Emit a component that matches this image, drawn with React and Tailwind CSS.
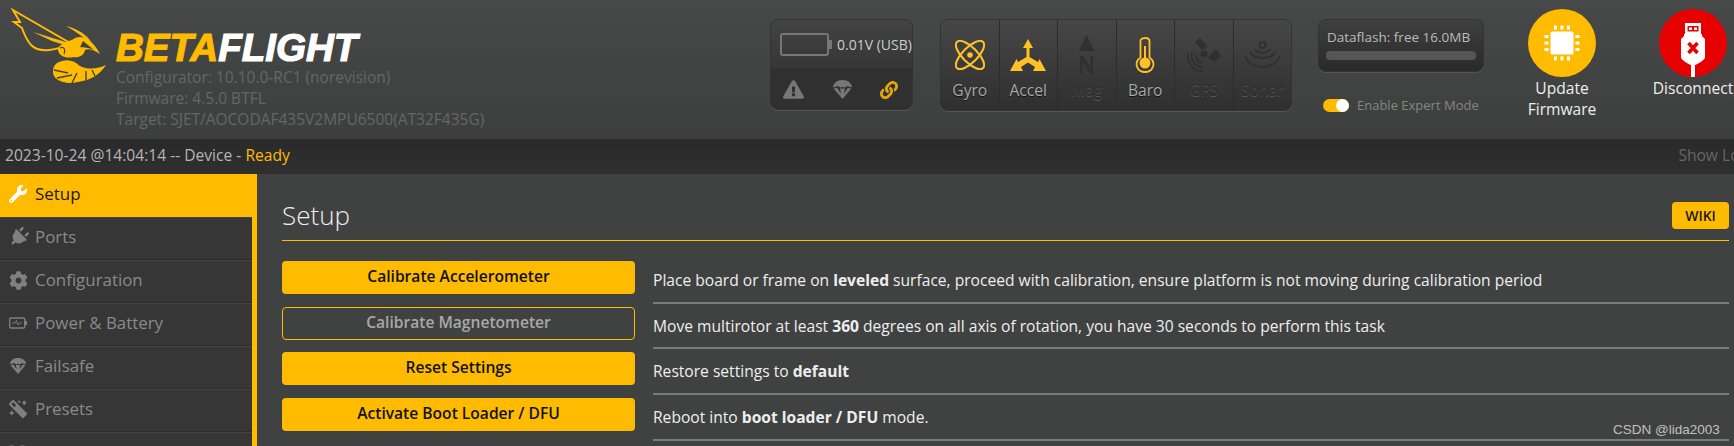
import React from "react";
import { FaWrench, FaPlug, FaCog, FaMagic, FaExclamationTriangle, FaLink, FaProjectDiagram } from "react-icons/fa";

const Wasp = () => (
  <svg width="116" height="90" viewBox="0 0 116 90" className="shrink-0">
    {/* wings */}
    <path d="M13 10 L70 43 C58 50 40 54 31 45 C27 40 24 34 22 28 L14 22 L20 22 Z" fill="none" stroke="#ffbb00" strokeWidth="2" />
    <path d="M33 32 L69 43 L68 46 L52 41 Z" fill="#ffbb00" />
    {/* antenna */}
    <path d="M66 26 C78 29 88 35 92 44 C84 37 76 32 66 26 Z" fill="#ffbb00" />
    {/* head and thorax */}
    <path d="M72 40 C80 33 92 38 100 54 C94 50 89 48 85 50 C84 56 78 58 74 57 C66 59 59 56 58 50 C58 46 64 42 72 40 Z" fill="#ffbb00" />
    <path d="M83 41 L94 50 C88 47 84 48 80 47 Z" fill="#404241" />
    <path d="M60 48 C64 46 66 50 64 54" fill="none" stroke="#404241" strokeWidth="1.200" />
    {/* abdomen */}
    <path d="M57 63 C66 58 74 60 80 66 C88 70 98 69 106 65 C100 74 92 80 78 82 C64 85 53 80 53 72 C53 68 54 65 57 63 Z" fill="#ffbb00" />
    <path d="M54 70 L68 73 M57 78 L72 75 M72 83 L77 73 M86 80 L86 71 M95 76 L92 70" stroke="#404241" strokeWidth="1.400" />
  </svg>
);

const Parachute = ({ size = 18, color = "currentColor" }) => (
  <svg width={size} height={size} viewBox="0 0 20 20" style={{ color }}>
    <path d="M1 8 C1 4 5 1 10 1 C15 1 19 4 19 8 L15 7 C14 7 13 7 12.500 8 L11 8 C10.500 7.500 9.500 7.500 9 8 L7.500 8 C7 7 6 7 5 7 Z" fill="currentColor" />
    <path d="M1.500 9 L10 19 L18.500 9 L15 8.500 L11.500 14 L12.300 9 L7.700 9 L8.500 14 L5 8.500 Z" fill="currentColor" />
  </svg>
);

const BatteryIcon = () => (
  <svg width="18" height="12" viewBox="0 0 18 12">
    <rect x="0.700" y="1" width="15" height="10" rx="1" fill="none" stroke="currentColor" strokeWidth="1.300" />
    <rect x="16" y="4" width="2" height="4" fill="currentColor" />
    <path d="M3 6 H6 L7.500 3.500 L9 8 L10.500 6 H13" fill="none" stroke="currentColor" strokeWidth="0.900" />
  </svg>
);

const Gyro = () => (
  <svg width="30" height="30" viewBox="0 0 30 30" fill="none" stroke="#ffc125" strokeWidth="2">
    <ellipse cx="15" cy="15" rx="18.500" ry="7.500" transform="rotate(45 15 15)" />
    <ellipse cx="15" cy="15" rx="18.500" ry="7.500" transform="rotate(-45 15 15)" />
    <circle cx="15" cy="15" r="2.800" fill="#ffc125" stroke="none" />
  </svg>
);

const Accel = () => (
  <svg width="36" height="32" viewBox="0 0 36 32" fill="#ffc125">
    <path d="M18 0 L23 9 H19.500 V18 L28 23 L29.500 20 L36 32 L23 32 L25 28 L18 23.500 L11 28 L13 32 L0 32 L6.500 20 L8 23 L16.500 18 V9 H13 Z" />
  </svg>
);

const Mag = () => (
  <svg width="17" height="39" viewBox="0 0 17 39" fill="#303030">
    <path d="M8.500 0 L16.500 16 H0.500 Z" />
    <path d="M2 21 H5 L12.500 33 V21 H15 V39 H12 L4.500 27 V39 H2 Z" />
  </svg>
);

const Baro = () => (
  <svg width="20" height="37" viewBox="0 0 20 37" fill="none">
    <path d="M5.500 21.500 V5 C5.500 1 14.500 1 14.500 5 V21.500 C22 27 17.500 36 10 36 C2.500 36 -2 27 5.500 21.500 Z" stroke="#ffc125" strokeWidth="1.800" />
    <rect x="9" y="10" width="2" height="16" fill="#ffc125" />
    <circle cx="10" cy="27" r="5.500" fill="#ffc125" />
  </svg>
);

const Gps = () => (
  <svg width="34" height="34" viewBox="0 0 34 34" fill="#303030">
    <path d="M8 4 L13 0 L20 8 L15 12 Z" />
    <path d="M24 16 L29 11 L34 18 L28 24 L21 20 Z" />
    <circle cx="17" cy="16" r="3.500" />
    <path d="M5 14 C3 22 8 29 15 29" fill="none" stroke="#303030" strokeWidth="2" />
    <path d="M1 15 C-1 25 7 34 16 33" fill="none" stroke="#303030" strokeWidth="2" />
    <path d="M9 17 C9 21 11 24 15 25" fill="none" stroke="#303030" strokeWidth="2" />
  </svg>
);

const Sonar = () => (
  <svg width="37" height="28" viewBox="0 0 37 28" fill="none" stroke="#303030" strokeWidth="2">
    <circle cx="18.500" cy="4" r="3" />
    <path d="M11 8 C13 13 24 13 26 8" />
    <path d="M6 11 C10 19 27 19 31 11" />
    <path d="M1 15 C7 30 30 30 36 15" />
  </svg>
);

const Chip = () => (
  <svg width="36" height="36" viewBox="0 0 36 36" fill="#fff">
    <rect x="6.500" y="6.500" width="23" height="23" rx="1.500" />
    <path d="M10 0.500h3v4h-3z M16.500 0.500h3v4h-3z M23 0.500h3v4h-3z M10 31.500h3v4h-3z M16.500 31.500h3v4h-3z M23 31.500h3v4h-3z M0.500 10h4v3h-4z M0.500 16.500h4v3h-4z M0.500 23h4v3h-4z M31.500 10h4v3h-4z M31.500 16.500h4v3h-4z M31.500 23h4v3h-4z" />
  </svg>
);

const UsbX = () => (
  <svg width="26" height="54" viewBox="0 0 26 54">
    <path d="M5 0 H21 V11 H5 Z M7.500 3 V8.500 H18.500 V3 Z" fill="#fff" fillRule="evenodd" />
    <rect x="9" y="4.500" width="3" height="2.500" fill="#fff" />
    <rect x="14" y="4.500" width="3" height="2.500" fill="#fff" />
    <path d="M4 11 H22 V13 L25 16 V34 C25 37 18 41 15 42 V54 H11 V42 C8 41 1 37 1 34 V16 L4 13 Z" fill="#fff" />
    <path d="M8.500 20 L17.500 30 M17.500 20 L8.500 30" stroke="#e60000" strokeWidth="3.500" />
  </svg>
);

const menu = [
  { label: "Ports", icon: <FaPlug size={20} className="rotate-45" /> },
  { label: "Configuration", icon: <FaCog size={19} /> },
  { label: "Power & Battery", icon: <BatteryIcon /> },
  { label: "Failsafe", icon: <Parachute size={18} /> },
  { label: "Presets", icon: <FaMagic size={18} className="-scale-x-100" /> },
  { label: "PID Tuning", icon: <FaProjectDiagram size={16} /> },
];

const sensors = [
  { label: "Gyro", icon: <Gyro />, on: true },
  { label: "Accel", icon: <Accel />, on: true },
  { label: "Mag", icon: <Mag /> },
  { label: "Baro", icon: <Baro />, on: true },
  { label: "GPS", icon: <Gps /> },
  { label: "Sonar", icon: <Sonar /> },
];

const rows = [
  {
    button: "Calibrate Accelerometer",
    text: <>Place board or frame on <b>leveled</b> surface, proceed with calibration, ensure platform is not moving during calibration period</>,
  },
  {
    button: "Calibrate Magnetometer",
    disabled: true,
    text: <>Move multirotor at least <b>360</b> degrees on all axis of rotation, you have 30 seconds to perform this task</>,
  },
  { button: "Reset Settings", text: <>Restore settings to <b>default</b></> },
  { button: "Activate Boot Loader / DFU", text: <>Reboot into <b>boot loader / DFU</b> mode.</> },
];

export default function App() {
  return (
    <div className="relative h-[446px] w-[1734px] overflow-hidden bg-[#404241] font-['Open_Sans',sans-serif]">
      {/* top bar */}
      <header className="flex h-[139px] bg-gradient-to-b from-[#474948] to-[#3d3f3e]">
        <div className="flex w-[770px] shrink-0 items-start">
          <Wasp />
          <div className="flex flex-col pt-[28px]">
            <div className="h-[39px] font-['Liberation_Sans',sans-serif] text-[38.6px] font-bold italic leading-[39px] text-white [-webkit-text-stroke:1.2px_currentColor]">
              <span className="text-[#ffbb00]">BETA</span>FLIGHT
            </div>
            <div className="text-[15.5px] leading-[21px] text-[#666]">
              <div>Configurator: 10.10.0-RC1 (norevision)</div>
              <div>Firmware: 4.5.0 BTFL</div>
              <div>Target: SJET/AOCODAF435V2MPU6500(AT32F435G)</div>
            </div>
          </div>
        </div>

        {/* battery panel */}
        <div className="mt-[19px] h-[91px] w-[143px] shrink-0 overflow-hidden rounded-lg border border-[#333] shadow-[0_1px_0_#555]">
          <div className="flex h-[48px] items-center bg-gradient-to-b from-[#424342] to-[#353635] pl-[9px]">
            <div className="flex h-[23px] w-[52px] items-center">
              <div className="h-[23px] w-[49px] rounded-[3px] border-[2px] border-[#777]"></div>
              <div className="h-[9px] w-[3px] bg-[#777]"></div>
            </div>
            <span className="ml-[5px] whitespace-nowrap text-[14px] text-[#ccc]">0.01V (USB)</span>
          </div>
          <div className="flex h-[43px] items-center justify-between bg-[#2f302f] pl-[12px] pr-[14px]">
            <FaExclamationTriangle size={21} className="text-[#777]" />
            <Parachute size={21} color="#777" />
            <FaLink size={18} className="text-[#e2a60a]" />
          </div>
        </div>

        {/* sensors */}
        <div className="ml-[27px] mt-[19px] flex h-[92px] w-[352px] shrink-0 overflow-hidden rounded-lg border border-[#333] bg-gradient-to-b from-[#464746] to-[#2e2f2e] shadow-[0_1px_0_#555]">
          {sensors.map((s) => (
            <div key={s.label} className="flex flex-1 flex-col items-center border-r border-[#2c2c2c] last:border-r-0">
              <div className="flex h-[56px] w-full items-center justify-center pt-[13px]">{s.icon}</div>
              <span className={s.on ? "mt-[3px] text-[15.6px] leading-[22px] text-[#a8a8a8] [text-shadow:0_1px_0_#111]" : "mt-[3px] text-[15.6px] leading-[22px] text-[#2e2e2e] [text-shadow:0_1px_0_#555]"}>
                {s.label}
              </span>
            </div>
          ))}
        </div>

        {/* dataflash and expert mode */}
        <div className="ml-[26px] mt-[19px] w-[166px] shrink-0">
          <div className="h-[53px] rounded-lg border border-[#333] bg-gradient-to-b from-[#3e3f3e] to-[#2a2a2a] px-[7px] pt-[8px] shadow-[0_1px_0_#555]">
            <div className="whitespace-nowrap pl-[1px] text-[13.5px] leading-[18px] text-[#bbb]">Dataflash: free 16.0MB</div>
            <div className="mt-[5px] h-[9px] rounded-[4px] bg-[#555]"></div>
          </div>
          <div className="ml-[5px] mt-[24px] flex items-center">
            <div className="flex h-[13px] w-[26px] justify-end rounded-full bg-[#ffbb00]">
              <div className="h-[13px] w-[13px] rounded-full bg-white"></div>
            </div>
            <span className="ml-[8px] whitespace-nowrap text-[13px] text-[#858585]">Enable Expert Mode</span>
          </div>
        </div>

        {/* round buttons */}
        <div className="ml-[28px] mt-[9px] flex w-[100px] shrink-0 flex-col items-center">
          <div className="flex h-[68px] w-[68px] items-center justify-center rounded-full bg-[#ffbb00]">
            <Chip />
          </div>
          <div className="mt-[1px] text-center text-[15.6px] leading-[21px] text-[#eee]">Update<br />Firmware</div>
        </div>
        <div className="ml-[47px] mt-[9px] flex w-[68px] shrink-0 flex-col items-center">
          <div className="flex h-[68px] w-[68px] items-end justify-center overflow-hidden rounded-full bg-[#e60000]">
            <UsbX />
          </div>
          <div className="mt-[1px] whitespace-nowrap text-center text-[15.6px] leading-[21px] text-[#eee]">Disconnect</div>
        </div>
      </header>

      {/* log bar */}
      <div className="flex h-[35px] items-center bg-gradient-to-b from-[#2a2a2a] to-[#2f2f2f] pb-[2px] pl-[5px] text-[15.6px] text-[#b5b5b5]">
        <span>
          2023-10-24 @14:04:14 -- Device - <span className="text-[#ffbb00]">Ready</span>
        </span>
        <span className="ml-auto mr-[-14px] text-[#666]">Show Log</span>
      </div>

      <div className="flex">
        {/* side menu */}
        <nav className="h-[272px] w-[257px] shrink-0 border-r-[5px] border-[#ffbb00] bg-[#363636]">
          <div className="flex h-[43px] items-center bg-[#ffbb00] pb-[3px] pl-[9px] text-[16.9px] text-[#1a1a1a]">
            <span className="flex w-[26px] text-white"><FaWrench size={18} /></span>
            Setup
          </div>
          {menu.map((m) => (
            <div key={m.label} className="flex h-[43px] items-center border-t border-b border-t-[#444] border-b-[#2c2c2c] pb-[3px] pl-[9px] text-[16.9px] text-[#8a8a8a]">
              <span className="flex w-[26px] text-[#808080]">{m.icon}</span>
              {m.label}
            </div>
          ))}
        </nav>

        {/* setup tab */}
        <main className="min-w-0 flex-1 pl-[25px] pr-[5px]">
          <div className="mt-[28px] flex h-[39px] items-start justify-between border-b border-[#ffbb00]">
            <span className="-mt-[4px] text-[26px] font-light leading-[34px] text-[#eee]">Setup</span>
            <span className="flex h-[27px] w-[57px] items-center justify-center rounded-[4px] bg-[#ffbb00] text-[14px] font-semibold text-[#1a1a1a]">WIKI</span>
          </div>
          <div className="mt-[17px]">
            {rows.map((r) => (
              <div key={r.button} className="flex h-[45.7px]">
                <div
                  className={
                    r.disabled
                      ? "mt-[3px] flex h-[33px] w-[353px] shrink-0 items-center justify-center rounded-[4px] border border-[#ffbb00] pb-[1px] text-[15.6px] font-semibold text-[#a8a8a8]"
                      : "mt-[3px] flex h-[33px] w-[353px] shrink-0 items-center justify-center rounded-[4px] bg-[#ffbb00] pb-[2px] text-[15.6px] font-semibold text-[#111]"
                  }
                >
                  {r.button}
                </div>
                <div className="ml-[18px] flex flex-1 items-start border-b-2 border-[#7b7b7b] pt-[10px] text-[15.6px] leading-[24px] text-[#eee]">
                  <span>{r.text}</span>
                </div>
              </div>
            ))}
          </div>
        </main>
      </div>

      {/* watermark */}
      <span className="absolute left-[1613px] top-[421px] font-['Liberation_Sans',sans-serif] text-[13.5px] leading-[18px] text-[#c0c0c0]">CSDN @lida2003</span>
    </div>
  );
}
